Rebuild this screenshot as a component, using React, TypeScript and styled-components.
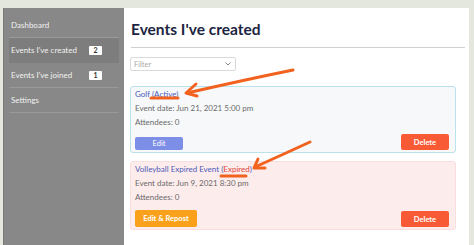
import styled, { createGlobalStyle } from "styled-components";

const GlobalStyle = createGlobalStyle`
  html, body {
    margin: 0;
    padding: 0;
    background: #e3e7de;
    font-family: Lato, "Open Sans", "Liberation Sans", sans-serif;
  }
`;

type Tone = "active" | "expired";

const events = [
  {
    name: "Golf",
    status: "Active",
    tone: "active" as Tone,
    date: "Jun 21, 2021 5:00 pm",
    attendees: 0,
    edit: "Edit",
  },
  {
    name: "Volleyball Expired Event",
    status: "Expired",
    tone: "expired" as Tone,
    date: "Jun 9, 2021 8:30 pm",
    attendees: 0,
    edit: "Edit & Repost",
  },
];

const App = () => {
  return (
    <>
      <GlobalStyle />
      <Page>
        <Sidebar>
          <NavItem>Dashboard</NavItem>
          <NavItem $active>
            Events I've created
            <Badge>2</Badge>
          </NavItem>
          <NavItem>
            Events I've joined
            <Badge>1</Badge>
          </NavItem>
          <NavItem>Settings</NavItem>
        </Sidebar>
        <Main>
          <Title>Events I've created</Title>
          <Rule />
          <FilterBox>
            <span>Filter</span>
            <svg width="6" height="4" viewBox="0 0 6 4">
              <path d="M0.5 0.5 L3 3 L5.5 0.5" fill="none" stroke="#888" strokeWidth="1" />
            </svg>
          </FilterBox>
          <CardList>
            {events.map((ev) => (
              <Card key={ev.name} $tone={ev.tone}>
                <CardTitle>
                  {ev.name} (<Status $tone={ev.tone}>{ev.status}</Status>)
                </CardTitle>
                <Info>Event date: {ev.date}</Info>
                <Info>Attendees: {ev.attendees}</Info>
                <Actions>
                  <EditButton $tone={ev.tone}>{ev.edit}</EditButton>
                  <DeleteButton>Delete</DeleteButton>
                </Actions>
              </Card>
            ))}
          </CardList>
          <Annotations width="342" height="237" viewBox="0 0 342 237">
            <g stroke="#f2621e" strokeWidth="3" strokeLinecap="round" strokeLinejoin="round" fill="none">
              <path d="M169 62 Q120 72 63 85" />
              <path d="M72 76 L62 85 L73 88" />
              <path d="M27 90 L54 90" />
              <path d="M186 134 Q160 146 131 159" />
              <path d="M134 151 L130 160 L141 160" />
              <path d="M97 168 L122 168" />
            </g>
          </Annotations>
        </Main>
      </Page>
    </>
  );
};

const Page = styled.div`
  display: flex;
  height: 237px;
  padding: 8px 0 0 3px;
  overflow: hidden;
`;

const Sidebar = styled.nav`
  width: 110px;
  flex-shrink: 0;
  background: #888888;
  border-left: 1px solid #7a7a7a;
  padding: 5px 5px 0 5px;
  display: flex;
  flex-direction: column;
`;

const NavItem = styled.div<{ $active?: boolean }>`
  height: 24px;
  display: flex;
  align-items: center;
  padding-left: 2px;
  font-size: 8px;
  color: #f2f2f2;
  border-bottom: 1px solid ${(p) => (p.$active ? "#7d7d7d" : "#9a9a9a")};
  background: ${(p) => (p.$active ? "#7d7d7d" : "transparent")};
`;

const Badge = styled.span`
  margin-left: auto;
  margin-right: 17px;
  width: 13px;
  height: 9px;
  background: #fff;
  color: #333;
  font-size: 7px;
  font-weight: 700;
  display: flex;
  align-items: center;
  justify-content: center;
  border-radius: 1px;
`;

const Main = styled.main`
  position: relative;
  width: 335px;
  background: #fff;
  padding: 10px 4px 0 6px;
  flex-shrink: 0;
`;

const Title = styled.h1`
  margin: 0 0 0 1px;
  font-size: 15.5px;
  line-height: 22px;
  font-weight: 700;
  color: #1c2541;
`;

const Rule = styled.div`
  height: 1px;
  background: #cfcfcf;
  margin: 7px 0 9px 1px;
`;

const FilterBox = styled.div`
  border: 1px solid #dadada;
  border-radius: 2px;
  display: flex;
  align-items: center;
  justify-content: space-between;
  padding: 0 4px 0 3px;
  box-sizing: border-box;
  width: 106px;
  height: 14px;
  font-size: 7.5px;
  color: #aaa;
`;

const CardList = styled.div`
  margin-top: 15px;
  margin-right: 9px;
  display: flex;
  flex-direction: column;
  gap: 8px;
`;

const Card = styled.div<{ $tone: Tone }>`
  height: ${(p) => (p.$tone === "active" ? "67px" : "69px")};
  box-sizing: border-box;
  border: 1px solid ${(p) => (p.$tone === "active" ? "#b9e2ea" : "#f8dede")};
  background: ${(p) => (p.$tone === "active" ? "#f6f8fa" : "#fdecec")};
  border-radius: 3px;
  padding: 1px 6px 2px 4px;
  display: flex;
  flex-direction: column;
`;

const CardTitle = styled.div`
  font-size: 8px;
  line-height: 13px;
  color: #4c5bb8;
`;

const Status = styled.span<{ $tone: Tone }>`
  color: ${(p) => (p.$tone === "active" ? "#4c5bb8" : "#e0443a")};
`;

const Info = styled.div`
  font-size: 8px;
  line-height: 13px;
  margin-top: 1px;
  color: #6a6a6a;
`;

const Actions = styled.div`
  margin-top: auto;
  display: flex;
  justify-content: space-between;
  align-items: flex-end;
`;

const EditButton = styled.div<{ $tone: Tone }>`
  height: ${(p) => (p.$tone === "active" ? "13px" : "17px")};
  width: ${(p) => (p.$tone === "active" ? "48px" : "62px")};
  background: ${(p) => (p.$tone === "active" ? "#7d8ee6" : "#f9a11b")};
  color: #fff;
  font-size: 7.5px;
  font-weight: ${(p) => (p.$tone === "active" ? 400 : 700)};
  border-radius: 2px;
  display: flex;
  align-items: center;
  justify-content: center;
`;

const DeleteButton = styled.div`
  width: 48px;
  height: 16px;
  background: #f95a36;
  color: #fff;
  font-size: 7.5px;
  font-weight: 700;
  border-radius: 2px;
  display: flex;
  align-items: center;
  justify-content: center;
`;

const Annotations = styled.svg`
  position: absolute;
  left: 0;
  top: 0;
  pointer-events: none;
`;

export default App;
